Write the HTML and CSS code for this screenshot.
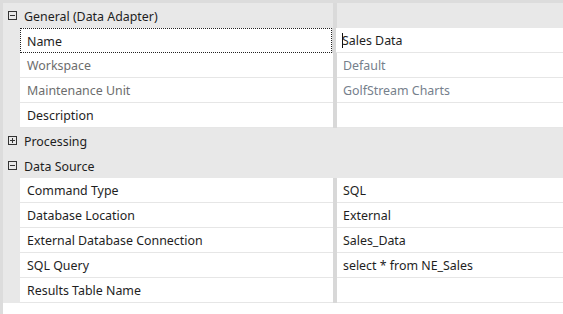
FILE: index.html
```html
<!doctype html>
<html lang="en">
<head>
    <meta charset="UTF-8">
    <title>Data Adapter Properties</title>
    <link rel="stylesheet" href="styles.css">
</head>
<body>
<div class="grid">
    <div class="cat">
        <span class="toggle minus"></span>
        <span class="cat-text">General (Data Adapter)</span>
        <span class="cat-split"></span>
    </div>
    <div class="row">
        <div class="gutter"></div>
        <div class="label focus">Name</div>
        <div class="split"></div>
        <div class="value"><span class="caret"></span>Sales Data</div>
    </div>
    <div class="row readonly">
        <div class="gutter"></div>
        <div class="label">Workspace</div>
        <div class="split"></div>
        <div class="value">Default</div>
    </div>
    <div class="row readonly">
        <div class="gutter"></div>
        <div class="label">Maintenance Unit</div>
        <div class="split"></div>
        <div class="value">GolfStream Charts</div>
    </div>
    <div class="row">
        <div class="gutter"></div>
        <div class="label">Description</div>
        <div class="split"></div>
        <div class="value"></div>
    </div>
    <div class="cat">
        <span class="toggle plus"></span>
        <span class="cat-text">Processing</span>
    </div>
    <div class="cat">
        <span class="toggle minus"></span>
        <span class="cat-text">Data Source</span>
    </div>
    <div class="row">
        <div class="gutter"></div>
        <div class="label">Command Type</div>
        <div class="split"></div>
        <div class="value">SQL</div>
    </div>
    <div class="row">
        <div class="gutter"></div>
        <div class="label">Database Location</div>
        <div class="split"></div>
        <div class="value">External</div>
    </div>
    <div class="row">
        <div class="gutter"></div>
        <div class="label">External Database Connection</div>
        <div class="split"></div>
        <div class="value">Sales_Data</div>
    </div>
    <div class="row">
        <div class="gutter"></div>
        <div class="label">SQL Query</div>
        <div class="split"></div>
        <div class="value">select * from NE_Sales</div>
    </div>
    <div class="row">
        <div class="gutter"></div>
        <div class="label">Results Table Name</div>
        <div class="split"></div>
        <div class="value"></div>
    </div>
</div>
</body>
</html>
```

FILE: styles.css
```css
html,body{
    width:100%;
    height:100%;
    margin:0px;
    padding:0px;
    background:#fff;
}
body{
    font-family:"Noto Sans","Open Sans",sans-serif;
    font-size:12.4px;
    color:#1e1e1e;
    border-left:3px solid #dcdcdc;
    box-sizing:border-box;
}
.grid{
    border-top:3px solid #dcdcdc;
}
.cat{
    position:relative;
    height:25px;
    background:#e8e8e8;
    display:flex;
    align-items:center;
}
.cat-text{
    margin-left:21px;
    padding-top:1px;
}
.cat-split{
    position:absolute;
    top:0px;
    left:330px;
    width:4px;
    height:25px;
    background:#dadada;
}
.toggle{
    position:absolute;
    left:5px;
    top:8px;
    width:7px;
    height:7px;
    border:1px solid #333;
}
.toggle:before{
    content:"";
    position:absolute;
    left:1px;
    top:3px;
    width:5px;
    height:1px;
    background:#333;
}
.toggle.plus:after{
    content:"";
    position:absolute;
    left:3px;
    top:1px;
    width:1px;
    height:5px;
    background:#333;
}
.row{
    display:flex;
    height:25px;
}
.gutter{
    width:17px;
    flex:none;
    background:#e8e8e8;
}
.label,.value{
    height:23px;
    padding-top:1px;
    line-height:24px;
    border-bottom:1px solid #e6e6e6;
    white-space:nowrap;
}
.label{
    width:306px;
    padding-left:7px;
    flex:none;
}
.label.focus{
    width:304px;
    height:22px;
    line-height:23px;
    border:1px dotted #222;
    margin-bottom:-1px;
    padding-left:6px;
}
.split{
    width:4px;
    flex:none;
    background:#d8d8d8;
}
.value{
    flex:1;
    padding-left:6px;
}
.caret{
    display:inline-block;
    width:1px;
    height:15px;
    background:#111;
    vertical-align:-3px;
    margin-right:-1px;
}
.readonly .label{
    color:#6d6d6d;
}
.readonly .value{
    color:#76808c;
}
```
